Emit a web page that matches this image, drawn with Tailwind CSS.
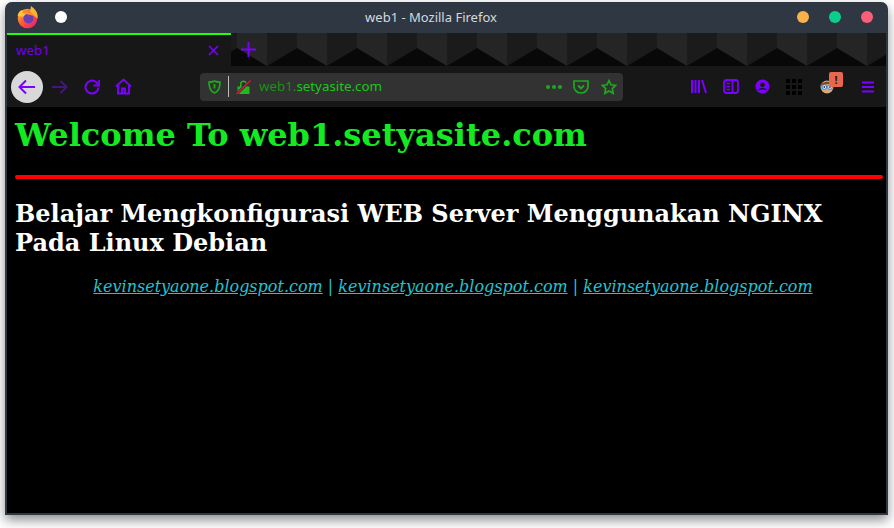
<!DOCTYPE html>
<html><head><meta charset="utf-8"><script src="https://cdn.jsdelivr.net/npm/@tailwindcss/browser@4"></script></head>
<body class="bg-white w-[894px] h-[528px] overflow-hidden">
<div class="ml-[5px] mt-[2px] w-[883px] h-[513px] flex flex-col rounded-t-[7px] overflow-hidden bg-[#2f3742] shadow-[0_5px_12px_rgba(0,0,0,0.45)] border-x-2 border-b-2 border-[#2f3742]">
 <div class="h-[31px] shrink-0 relative flex items-center justify-center text-[#d5d9df] text-[13px] font-['Noto_Sans',sans-serif]">
  <span class="ml-[-31px]">web1 - Mozilla Firefox</span>
  <svg class="absolute left-[9px] top-[3px] w-[24px] h-[24px]" viewBox="0 0 24 24"><defs><linearGradient id="fx" x1="0" y1="0" x2="1" y2="1"><stop offset="0" stop-color="#ffbd2e"/><stop offset=".5" stop-color="#ff5634"/><stop offset="1" stop-color="#e31587"/></linearGradient></defs><circle cx="11.500" cy="13.500" r="9.800" fill="url(#fx)"/><path d="M15 1c4 3 7.500 7 6.500 12.500L17 10l-3-3z" fill="#ffb22e"/><path d="M1.700 11C2 8 4 5 7 5l-1 2.500 5 1.500-5 3z" fill="#ffc53a"/><circle cx="12.500" cy="13.500" r="5" fill="#6a3fb0"/><path d="M7 9c3-2.500 8-2 10 2-3-1.500-6-2-10-2z" fill="#ff9a2e"/></svg>
  <div class="absolute left-[48px] top-[9px] w-3 h-3 rounded-full bg-white"></div>
  <div class="absolute left-[790px] top-[9px] w-3 h-3 rounded-full bg-[#fbb149]"></div>
  <div class="absolute left-[822px] top-[9px] w-3 h-3 rounded-full bg-[#0cce8a]"></div>
  <div class="absolute left-[854px] top-[9px] w-3 h-3 rounded-full bg-[#fb5f78]"></div>
 </div>
 <div class="h-[33px] shrink-0 flex bg-[#080808] relative">
  <svg class="absolute inset-0 w-full h-full" xmlns="http://www.w3.org/2000/svg"><defs><pattern id="pt" x="50" y="0" width="60" height="33" patternUnits="userSpaceOnUse"><rect width="60" height="33" fill="#080808"/><path d="M0 0H30V33L0 15z" fill="#252525"/><path d="M30 0H60V15L30 33z" fill="#1b1b1b"/></pattern></defs><rect width="100%" height="100%" fill="url(#pt)"/></svg>
  <div class="relative w-[224px] h-full bg-[#171717] border-t-2 border-[#22ff00] flex items-center pl-[9px] pr-[12px] text-[#7000f0] text-[13.333px] font-['Noto_Sans',sans-serif]">
   <span class="flex-1">web1</span>
   <svg class="w-[11px] h-[11px]" viewBox="0 0 11 11" fill="none" stroke="#7b00ff" stroke-width="1.500"><path d="M1 1l9 9M10 1l-9 9"/></svg>
  </div>
  <svg class="relative ml-[10px] mt-[9px] w-[15px] h-[15px]" viewBox="0 0 14 14" fill="none" stroke="#7b00ff" stroke-width="1.800"><path d="M7 0v14M0 7h14"/></svg>
 </div>
 <div class="h-[41px] shrink-0 bg-[#171717] flex items-center relative">
  <div class="ml-[4px] w-8 h-8 rounded-full bg-[#d8d8d8] flex items-center justify-center">
   <svg class="w-[18px] h-[16px]" viewBox="0 0 18 16" fill="none" stroke="#7b00ff" stroke-width="2"><path d="M17 8H2M8 1.500L1.500 8 8 14.500"/></svg>
  </div>
  <svg class="ml-[8px] w-[17px] h-[16px]" viewBox="0 0 18 16" fill="none" stroke="#43177f" stroke-width="2"><path d="M1 8h15M10 1.500L16.500 8 10 14.500"/></svg>
  <svg class="ml-[16px] w-[16px] h-[16px]" viewBox="0 0 16 16" fill="none" stroke="#7b00ff" stroke-width="2"><path d="M14.500 8.500a6.500 6.500 0 1 1-2.200-5.300L14.500 5.500"/><path d="M15 1v5.500h-5.500" stroke-width="1.800"/></svg>
  <svg class="ml-[15px] w-[17px] h-[17px]" viewBox="0 0 17 17" fill="none" stroke="#7b00ff" stroke-width="1.900"><path d="M1 8.500L8.500 1.500 16 8.500M3 7.500V15.500H14V7.500"/><path d="M7 15.500V10.500H10V15.500"/></svg>
  <div class="ml-[68px] w-[423px] h-[28px] rounded-[4px] bg-[#323232] flex items-center text-[13.333px] font-['Noto_Sans',sans-serif]">
   <svg class="ml-[8px] w-[13px] h-[14px]" viewBox="0 0 13 14" fill="none" stroke="#1fa81f" stroke-width="1.700"><path d="M1 2.200C4 2.200 5 1.500 6.500 1 8 1.500 9 2.200 12 2.200 12 8 10 11.500 6.500 13 3 11.500 1 8 1 2.200z"/><path d="M6.500 4v4.500" stroke-width="1.800"/></svg>
   <div class="ml-[7px] w-px h-[21px] bg-[#bdbdbd]"></div>
   <svg class="ml-[7px] w-[15px] h-[16px]" viewBox="0 0 15 16"><path d="M1.500 15V7.500H4V5a3.500 3.500 0 0 1 7 0V7.500H13.500V15z" fill="#1fb81f"/><path d="M5.500 7.500V5a2 2 0 0 1 4 0V7.500z" fill="#323232"/><path d="M0.500 15L14.500 1.500" stroke="#323232" stroke-width="3"/><path d="M0.500 15L14.500 1.500" stroke="#e8123c" stroke-width="1.500"/></svg>
   <span class="ml-[8px] text-[#1a8f1a]">web1.</span><span class="text-[#17c917]">setyasite.com</span>
   <div class="flex-1"></div>
   <div class="flex gap-[2px]"><i class="w-1 h-1 rounded-full bg-[#1fa81f]"></i><i class="w-1 h-1 rounded-full bg-[#1fa81f]"></i><i class="w-1 h-1 rounded-full bg-[#1fa81f]"></i></div>
   <svg class="ml-[11px] w-[16px] h-[14px]" viewBox="0 0 16 14" fill="none" stroke="#1fa81f" stroke-width="1.700"><path d="M1 1H15V6.500C15 10.500 11.500 13 8 13S1 10.500 1 6.500z"/><path d="M5 5.500L8 8.500 11 5.500" stroke-width="1.800"/></svg>
   <svg class="ml-[12px] mr-[6px] w-[16px] h-[16px]" viewBox="0 0 16 16" fill="none" stroke="#1fa81f" stroke-width="1.700"><path d="M8 1.500l2 4.300 4.700.6-3.400 3.200.9 4.700L8 12l-4.200 2.300.9-4.700L1.300 6.400 6 5.800z"/></svg>
  </div>
  <svg class="ml-[68px] w-[16px] h-[15px]" viewBox="0 0 16 15" fill="none" stroke="#7b00ff" stroke-width="2"><path d="M1 1v13M4.500 1v13M8 1v13M11 1l4 13"/></svg>
  <svg class="ml-[16px] w-[16px] h-[15px]" viewBox="0 0 16 15" fill="none" stroke="#7b00ff" stroke-width="1.800"><rect x="1" y="1" width="14" height="13" rx="2.500"/><path d="M9.500 1v13"/><path d="M3.500 4.500H7M3.500 7.500H7M3.500 10.500H7" stroke-width="1.300"/></svg>
  <svg class="ml-[16px] w-[15px] h-[15px]" viewBox="0 0 15 15"><circle cx="7.500" cy="7.500" r="7" fill="#7b00ff"/><circle cx="7.500" cy="5.800" r="2.400" fill="#171717"/><path d="M3.300 11.200C4.500 9.300 10.500 9.300 11.700 11.200" stroke="#171717" stroke-width="1.500" fill="none"/></svg>
  <div class="ml-[16px] w-[16px] h-[16px] grid grid-cols-3 gap-[2px]"><i class="bg-black"></i><i class="bg-black"></i><i class="bg-black"></i><i class="bg-black"></i><i class="bg-black"></i><i class="bg-black"></i><i class="bg-black"></i><i class="bg-black"></i><i class="bg-black"></i></div>
  <div class="relative ml-[18px] w-[15px] h-[15px]">
   <svg class="w-[15px] h-[15px]" viewBox="0 0 15 15"><circle cx="7" cy="8" r="6.500" fill="#d8a878"/><path d="M1 7C1 2 12 1 13.500 6 9 4 5 5 1 7z" fill="#7a4a1e"/><circle cx="4.300" cy="8" r="2.300" fill="#fff" stroke="#2f7fd0"/><circle cx="10" cy="8" r="2.300" fill="#fff" stroke="#2f7fd0"/><circle cx="4.300" cy="8" r=".9" fill="#234"/><circle cx="10" cy="8" r=".9" fill="#234"/></svg>
   <div class="absolute left-[9px] top-[-7px] w-[14px] h-[15px] rounded-[2px] bg-[#e8674f] text-[#3a1208] text-[11px] font-bold leading-[15px] text-center font-['Noto_Sans',sans-serif]">!</div>
  </div>
  <svg class="ml-[27px] w-[12px] h-[12px]" viewBox="0 0 12 12" fill="none" stroke="#7b00ff" stroke-width="1.900"><path d="M0 1.500h12M0 6h12M0 10.500h12"/></svg>
 </div>
 <div class="flex-1 bg-black pl-[8px] pr-[3px] font-['DejaVu_Serif',serif] overflow-hidden">
  <h1 class="mt-[7px] text-[32px] leading-[42px] font-bold text-[#13ea22]">Welcome To web1.setyasite.com</h1>
  <div class="mt-[19px] h-1 rounded-[2px] bg-[#ff0000]"></div>
  <h2 class="mt-[20px] text-[24px] leading-[29px] font-bold text-white">Belajar Mengkonfigurasi WEB Server Menggunakan NGINX Pada Linux Debian</h2>
  <p class="mt-[17px] pl-[8px] text-center italic text-[16px] leading-[26px] text-[#22c3d3]"><a class="underline">kevinsetyaone.blogspot.com</a> | <a class="underline">kevinsetyaone.blogspot.com</a> | <a class="underline">kevinsetyaone.blogspot.com</a></p>
 </div>
</div>
</body></html>
